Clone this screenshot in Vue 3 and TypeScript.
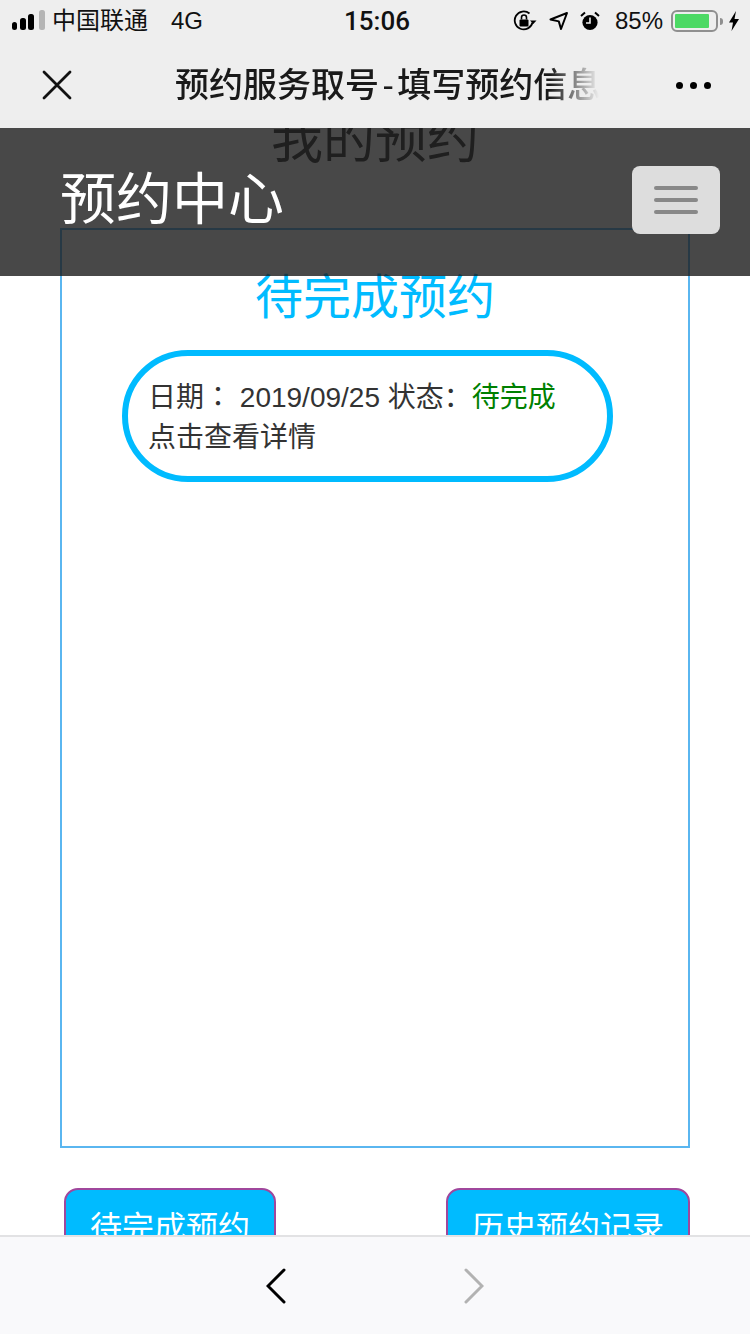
<script setup lang="ts">
const carrier = '中国联通'
</script>

<template>
  <div class="screen">
    <main class="page">
      <h1 class="page-title">我的预约</h1>
      <section class="panel">
        <h2 class="panel-title">待完成预约</h2>
        <div class="pill">
          <div>日期<span class="colon">：</span> 2019/09/25 状态：<span class="state">待完成</span></div>
          <div>点击查看详情</div>
        </div>
      </section>
      <div class="actions">
        <button class="action action-a">待完成预约</button>
        <button class="action action-b">历史预约记录</button>
      </div>
    </main>

    <header class="chrome">
      <div class="status">
        <div class="status-left">
          <svg class="signal" width="34" height="22" viewBox="0 0 34 22">
            <rect x="0" y="12" width="5" height="8" rx="2.5" fill="#000" />
            <rect x="8" y="8" width="6" height="12" rx="2.5" fill="#000" />
            <rect x="16" y="4" width="6" height="16" rx="2.5" fill="#000" />
            <rect x="27" y="0" width="6" height="20" rx="2.5" fill="#b5b5b5" />
          </svg>
          <span class="carrier">{{ carrier }}</span>
          <span class="net">4G</span>
        </div>
        <div class="time">15:06</div>
        <div class="status-right">
          <svg class="ico-lock" width="24" height="22" viewBox="0 0 24 22">
            <path d="M19.500 12.500A9 9 0 1 1 16.500 3.500" fill="none" stroke="#000" stroke-width="1.800" />
            <path d="M17 10.500h6.500l-3.200 3.500z" fill="#000" />
            <rect x="6.500" y="9.500" width="9" height="7" rx="1" fill="#000" />
            <path d="M8.500 9.500V7.500a2.500 2.500 0 0 1 5 0v2" fill="none" stroke="#000" stroke-width="1.600" />
          </svg>
          <svg class="ico-loc" width="20" height="20" viewBox="0 0 20 20">
            <path d="M1.500 8.500 18 2l-6 16-2.200-7.600z" fill="none" stroke="#000" stroke-width="2" stroke-linejoin="round" />
          </svg>
          <svg class="ico-alarm" width="20" height="20" viewBox="0 0 20 20">
            <circle cx="10" cy="11.500" r="7.600" fill="#000" />
            <path d="M10 6.500v5.500H6" fill="none" stroke="#eee" stroke-width="1.600" />
            <path d="M1 5 5 1.500M19 5l-4-3.500" stroke="#000" stroke-width="2" />
          </svg>
          <span class="percent">85%</span>
          <div class="battery"><div class="battery-level"></div></div>
          <div class="battery-nub"></div>
          <svg class="ico-bolt" width="12" height="20" viewBox="0 0 12 20">
            <path d="M8 0 1 11.500h4L3.500 20 11 8H6.500z" fill="#000" />
          </svg>
        </div>
      </div>
      <div class="titlebar">
        <svg class="close" width="30" height="30" viewBox="0 0 30 30">
          <path d="M2 2 28 28M28 2 2 28" stroke="#111" stroke-width="2.800" stroke-linecap="round" />
        </svg>
        <div class="chrome-title">预约服务取号<span class="dash">-</span>填写预约信息</div>
        <div class="more"><i></i><i></i><i></i></div>
      </div>
    </header>

    <div class="navbar">
      <div class="brand">预约中心</div>
      <button class="toggle" aria-label="menu"><i></i><i></i><i></i></button>
    </div>

    <footer class="toolbar">
      <svg width="20" height="36" viewBox="0 0 20 36">
        <path d="M18 2 2 18 18 34" fill="none" stroke="#000" stroke-width="3" stroke-linecap="round" stroke-linejoin="miter" />
      </svg>
      <svg width="20" height="36" viewBox="0 0 20 36">
        <path d="M2 2 18 18 2 34" fill="none" stroke="#b2b2b2" stroke-width="3" stroke-linecap="round" stroke-linejoin="miter" />
      </svg>
    </footer>
  </div>
</template>

<style>
body { margin: 0; }
</style>

<style scoped>
.screen {
  position: relative;
  width: 750px;
  height: 1334px;
  overflow: hidden;
  background: #fff;
  font-family: "Liberation Sans", "Noto Sans CJK SC", sans-serif;
  color: #333;
}
.page {
  display: flex;
  flex-direction: column;
  padding-top: 104px;
}
.page-title {
  margin: 0;
  height: 124px;
  font-size: 52px;
  line-height: 72px;
  font-weight: 400;
  text-align: center;
  color: #333;
}
.panel {
  box-sizing: border-box;
  width: 630px;
  height: 920px;
  margin-left: 60px;
  border: 2px solid #5ab6f0;
}
.panel-title {
  margin: 0;
  padding-top: 32px;
  font-size: 48px;
  line-height: 72px;
  font-weight: 400;
  text-align: center;
  color: #00bbff;
}
.pill {
  box-sizing: border-box;
  width: 491px;
  height: 132px;
  margin: 16px 0 0 60px;
  padding: 19px 20px;
  border: 6px solid #00bbff;
  border-radius: 66px;
  font-size: 28px;
  line-height: 40px;
  color: #333;
}
.colon { font-family: "Noto Sans CJK JP", sans-serif; }
.state { color: #008000; }
.actions {
  display: flex;
  justify-content: space-between;
  margin-top: 40px;
  padding: 0 60px 0 64px;
}
.action {
  box-sizing: border-box;
  height: 80px;
  padding: 0 24px;
  border: 2px solid #a0479c;
  border-radius: 14px;
  background: #00bbff;
  color: #fff;
  font-family: inherit;
  font-size: 32px;
  line-height: 72px;
  white-space: nowrap;
}
.chrome {
  position: absolute;
  top: 0;
  left: 0;
  width: 750px;
  height: 128px;
  background: #eee;
}
.status {
  position: relative;
  display: flex;
  align-items: center;
  justify-content: space-between;
  height: 42px;
  padding: 0 10px 0 12px;
  color: #111;
}
.status-left, .status-right { display: flex; align-items: center; }
.carrier { margin-left: 6px; font-size: 24px; line-height: 42px; }
.net { margin-left: 23px; font-size: 24px; line-height: 42px; }
.time {
  position: absolute;
  left: 344px;
  top: 0;
  font-family: Roboto, "Liberation Sans", sans-serif;
  font-weight: 500;
  font-size: 26px;
  line-height: 42px;
}
.ico-loc { margin-left: 12px; }
.ico-alarm { margin-left: 11px; }
.percent { margin-left: 15px; font-size: 24px; line-height: 42px; }
.battery {
  box-sizing: border-box;
  width: 47px;
  height: 22px;
  margin-left: 8px;
  padding: 2px;
  border: 2px solid #8f8f8f;
  border-radius: 6px;
}
.battery-level { width: 34px; height: 14px; background: #4cd964; border-radius: 1px; }
.battery-nub { width: 3px; height: 7px; margin-left: 2px; background: #8f8f8f; border-radius: 0 3px 3px 0; }
.ico-bolt { margin-left: 5px; }
.titlebar {
  display: flex;
  align-items: center;
  height: 86px;
  padding-left: 42px;
}
.close { flex: none; }
.chrome-title {
  flex: none;
  width: 424px;
  margin-left: 103px;
  overflow: hidden;
  white-space: nowrap;
  font-size: 34px;
  line-height: 50px;
  font-weight: 500;
  color: #1a1a1a;
  -webkit-mask-image: linear-gradient(to right, #000 375px, transparent 424px);
  mask-image: linear-gradient(to right, #000 375px, transparent 424px);
}
.dash { padding: 0 3.5px; }
.more { display: flex; gap: 7px; margin-left: 77px; }
.more i { display: block; width: 7px; height: 7px; border-radius: 50%; background: #000; }
.navbar {
  position: absolute;
  top: 128px;
  left: 0;
  box-sizing: border-box;
  width: 750px;
  height: 148px;
  padding: 38px 30px 0 60px;
  display: flex;
  justify-content: space-between;
  align-items: flex-start;
  background: rgba(26, 26, 26, 0.8);
}
.brand {
  font-size: 56px;
  line-height: 68px;
  font-weight: 400;
  color: #fff;
}
.toggle {
  display: flex;
  flex-direction: column;
  align-items: center;
  justify-content: center;
  gap: 8px;
  box-sizing: border-box;
  width: 88px;
  height: 68px;
  padding: 0;
  border: 0;
  border-radius: 8px;
  background: #ddd;
}
.toggle i { display: block; width: 44px; height: 4px; border-radius: 2px; background: #888; }
.toolbar {
  position: absolute;
  left: 0;
  bottom: 0;
  box-sizing: border-box;
  width: 750px;
  height: 99px;
  display: flex;
  align-items: center;
  justify-content: center;
  gap: 178px;
  border-top: 2px solid #e2e2e4;
  background: #f9f9fb;
}
</style>
